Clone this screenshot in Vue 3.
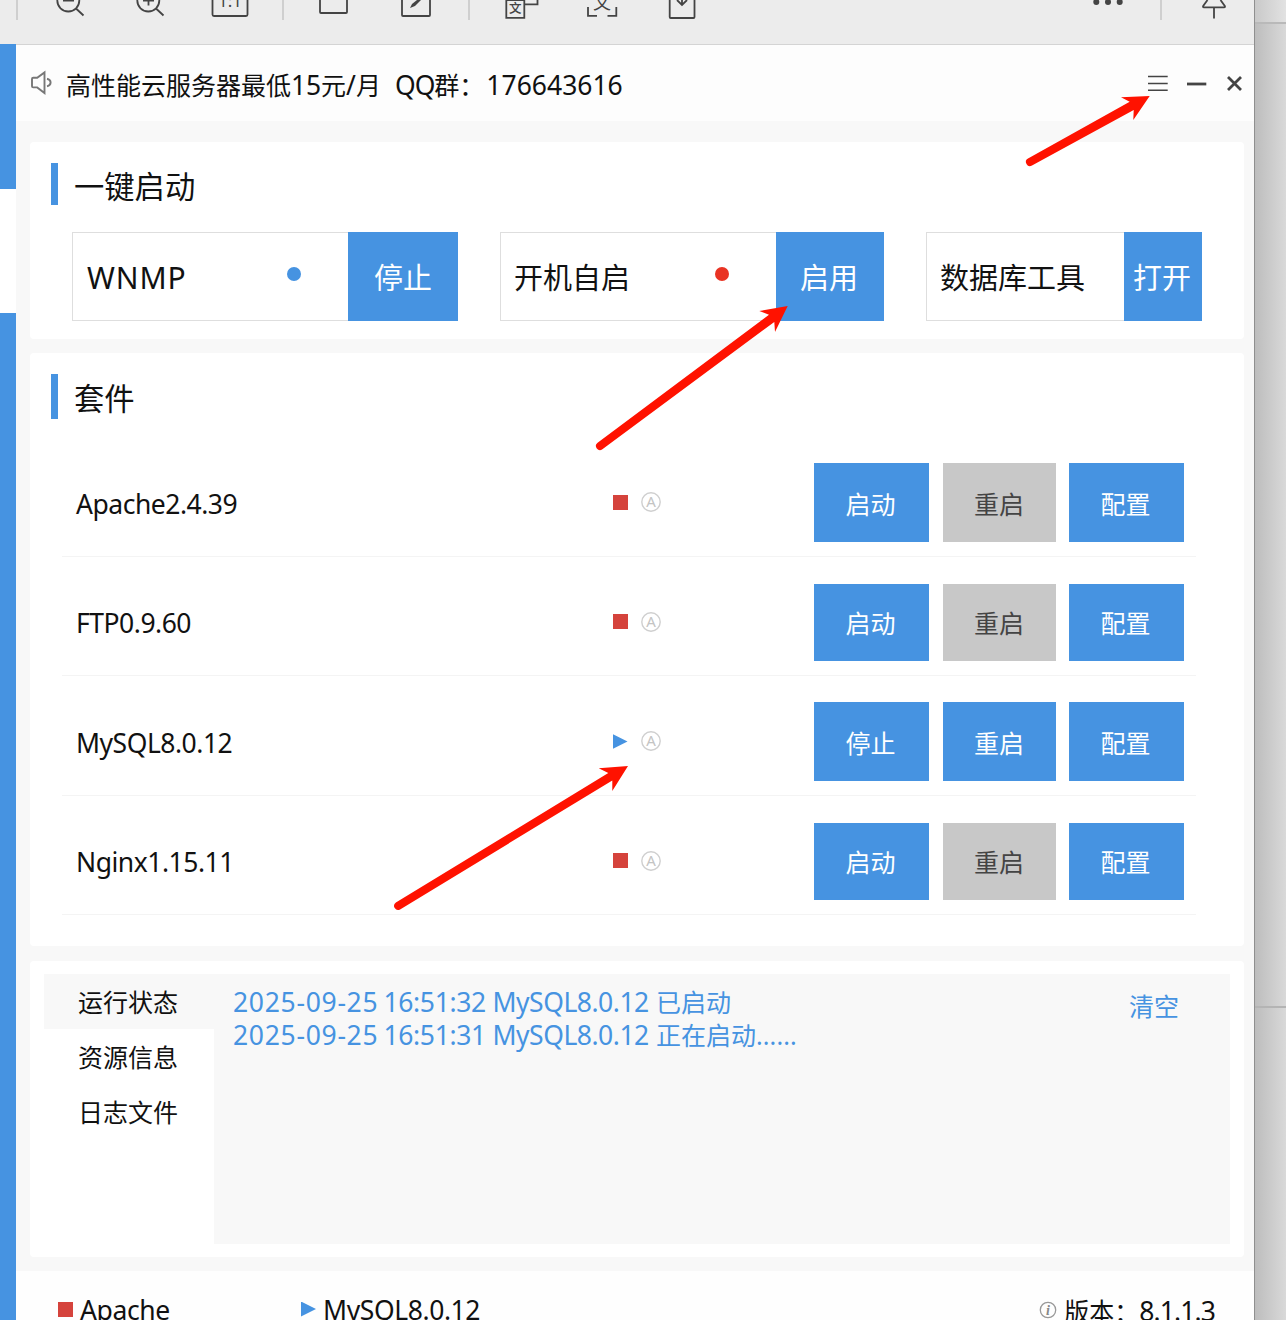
<script setup>
import { ref } from "vue";

const launchers = ref([
	{ name: "WNMP", latin: true, dot: "blue", action: "停止", size: "first" },
	{ name: "开机自启", dot: "red", action: "启用", size: "second" },
	{ name: "数据库工具", dot: null, action: "打开", size: "third" },
]);

const services = ref([
	{ name: "Apache2.4.39", running: false },
	{ name: "FTP0.9.60", running: false },
	{ name: "MySQL8.0.12", running: true },
	{ name: "Nginx1.15.11", running: false },
]);

const tabs = ["运行状态", "资源信息", "日志文件"];
const activeTab = ref(0);

const logs = ref([
	{ date: "2025-09-25", time: "16:51:32", name: "MySQL8.0.12", text: "已启动", tail: "" },
	{ date: "2025-09-25", time: "16:51:31", name: "MySQL8.0.12", text: "正在启动", tail: "......" },
]);

function toggle(service) {
	service.running = !service.running;
}

function clearLogs() {
	logs.value = [];
}
</script>

<template>
	<div class="desktop">
		<div class="window">
			<div class="toolbar">
				<svg width="40" height="24" viewBox="0 0 40 24">
					<path class="divider" d="M17 0V20" />
				</svg>
				<svg width="70" height="24" viewBox="40 0 70 24">
					<circle cx="68.3" cy="0.5" r="11" />
					<path d="M63 0.5H74M76 8.5L83.5 15.5" />
				</svg>
				<svg width="80" height="24" viewBox="110 0 80 24">
					<circle cx="148.3" cy="0.5" r="11" />
					<path d="M143 0.5H154M148.5 0V5.5M156 8.5L163.5 15.5" />
				</svg>
				<svg width="75" height="24" viewBox="190 0 75 24">
					<path d="M212.5 0V14.5Q212.5 16 214 16H246Q247.5 16 247.5 14.5V0" />
					<text x="230" y="7" font-size="17" text-anchor="middle" textLength="24">1:1</text>
				</svg>
				<svg width="35" height="24" viewBox="265 0 35 24">
					<path class="divider" d="M283 0V20" />
				</svg>
				<svg width="80" height="24" viewBox="300 0 80 24">
					<path d="M320 0V12Q320 13 321 13H346Q347 13 347 12V0" />
				</svg>
				<svg width="70" height="24" viewBox="380 0 70 24">
					<path d="M402 0V15Q402 16 403 16H429Q430 16 430 15V0" />
					<path class="filled" d="M417 0L412 4L410 8L415 6L421 0Z" />
				</svg>
				<svg width="38" height="24" viewBox="450 0 38 24">
					<path class="divider" d="M469 0V20" />
				</svg>
				<svg width="82" height="24" viewBox="488 0 82 24">
					<path d="M506.3 0V17.8H524.3V0M506 0.2H524M525 4.3H537.5V0" />
					<text x="515.2" y="13.4" font-size="12.5" font-weight="500" text-anchor="middle">文</text>
				</svg>
				<svg width="80" height="24" viewBox="570 0 80 24">
					<path d="M588 7V15.8H597M607.5 15.8H616.3V7" />
					<text x="602" y="8.5" font-size="18" text-anchor="middle">文</text>
				</svg>
				<svg width="430" height="24" viewBox="650 0 430 24">
					<path d="M669.7 0V17Q669.7 18 670.7 18H693.5Q694.5 18 694.5 17V0M682 0V5M677 0L682 5L687 0" />
				</svg>
				<svg width="60" height="24" viewBox="1080 0 60 24">
					<circle class="filled" cx="1096.3" cy="2" r="3" />
					<circle class="filled" cx="1108" cy="2" r="3" />
					<circle class="filled" cx="1119.7" cy="2" r="3" />
				</svg>
				<svg width="40" height="24" viewBox="1140 0 40 24">
					<path class="divider" d="M1161 0V20" />
				</svg>
				<svg width="74" height="24" viewBox="1180 0 74 24">
					<path d="M1207.5 0L1203.2 6Q1202.6 7.3 1204 7.3H1224Q1225.4 7.3 1224.8 6L1220.5 0M1214 7.5V18.5" />
				</svg>
			</div>

			<div class="main">
				<div class="sidebar">
					<div class="sidebar-active"></div>
				</div>

				<div class="panel">
					<div class="titlebar">
						<svg class="speaker" width="22" height="26" viewBox="30 70 22 26">
							<path d="M32 79Q32 77.8 33.2 77.8H37.2L44.5 72.4V93L37.2 87.4H33.2Q32 87.4 32 86.2Z" />
							<path d="M47 78.7Q50.6 79.5 50.6 82.5T47 86.4" />
						</svg>
						<div class="notice">
							高性能云服务器最低<span class="latin">15</span>元<span class="latin slash">/</span>月<span class="latin qq">QQ</span>群：<span class="latin group">176643616</span>
						</div>
						<svg class="controls" width="98" height="20" viewBox="1147 74 98 20">
							<path d="M1148 76.5H1167.7M1148 83.5H1167.7M1148 90.3H1167.7" stroke-width="1.4" />
							<path d="M1187 84H1206.3" stroke-width="2.8" />
							<path d="M1228 77L1241 90M1241 77L1228 90" stroke-width="2.8" />
						</svg>
					</div>

					<div class="content">
						<section class="card launch-card">
							<h2>一键启动</h2>
							<div class="launchers">
								<div v-for="item in launchers" :key="item.name" class="launcher" :class="item.size">
									<div class="launcher-box">
										<span class="launcher-name" :class="{ wide: item.latin }">{{ item.name }}</span>
										<span v-if="item.dot" class="dot" :class="item.dot"></span>
									</div>
									<button type="button">{{ item.action }}</button>
								</div>
							</div>
						</section>

						<section class="card suite-card">
							<h2>套件</h2>
							<div class="services">
								<div v-for="service in services" :key="service.name" class="service">
									<span class="service-name latin">{{ service.name }}</span>
									<span :class="service.running ? 'play' : 'stop'"></span>
									<svg class="auto" width="20" height="20" viewBox="0 0 20 20">
										<circle cx="10" cy="10" r="9.2" />
										<text x="10" y="15.3" text-anchor="middle">A</text>
									</svg>
									<div class="actions">
										<button type="button" @click="toggle(service)">
											{{ service.running ? "停止" : "启动" }}
										</button>
										<button class="middle" type="button" :disabled="!service.running">重启</button>
										<button type="button">配置</button>
									</div>
								</div>
							</div>
						</section>

						<section class="card status-card">
							<div class="tabs">
								<div
									v-for="(tab, index) in tabs"
									:key="tab"
									class="tab"
									:class="{ active: index === activeTab }"
									@click="activeTab = index"
								>
									{{ tab }}
								</div>
							</div>
							<div class="log">
								<div class="log-lines">
									<div v-for="log in logs" :key="log.time" class="log-line">
										<span class="log-date">{{ log.date }}</span>
										<span class="log-time">{{ log.time }}</span>
										<span class="latin log-name">{{ log.name }}</span>
										<span>{{ log.text }}<span class="log-tail">{{ log.tail }}</span></span>
									</div>
								</div>
								<div class="clear" @click="clearLogs">清空</div>
							</div>
						</section>
					</div>

					<div class="footer">
						<span class="stop"></span>
						<span class="footer-name first-name">Apache</span>
						<span class="play"></span>
						<span class="footer-name">MySQL8.0.12</span>
						<div class="version">
							<svg width="18" height="18" viewBox="0 0 18 18">
								<circle cx="9" cy="9" r="7.7" />
								<text x="9" y="13.6" text-anchor="middle">i</text>
							</svg>
							<span>版本：<span class="latin">8.1.1.3</span></span>
						</div>
					</div>
				</div>
			</div>
		</div>

		<div class="backdrop">
			<div class="backdrop-top"></div>
			<div class="backdrop-middle"></div>
		</div>

		<svg class="arrows" width="1286" height="1320" viewBox="0 0 1286 1320">
			<path d="M1028 158.5L1129.7 101.7L1121 97.3L1149.7 96L1133.3 120L1133.7 110L1032 165.5A4 4 0 0 1 1028 158.5Z" />
			<path d="M597.6 442.8L769 314.7L759.3 311L787.7 306L775 332L774.3 322L602.4 449.2A4 4 0 0 1 597.6 442.8Z" />
			<path d="M395.9 902.6L608.3 773L598.7 768.3L628 766L612.3 791L612.3 780.5L400.1 909.4A4 4 0 0 1 395.9 902.6Z" />
		</svg>
	</div>
</template>

<style>
body {
	margin: 0;
	overflow: hidden;
}
</style>

<style scoped>
.desktop {
	position: relative;
	display: flex;
	width: 1286px;
	height: 1320px;
	overflow: hidden;
	background: #c8c8c8;
	color: #111;
	font-family: "Noto Sans", "Noto Sans CJK SC", sans-serif;
	font-size: 25px;
}

.window {
	display: flex;
	flex-direction: column;
	width: 1254px;
	height: 1320px;
}

.toolbar {
	display: flex;
	flex: none;
	box-sizing: border-box;
	height: 45px;
	background: #ececec;
	border-bottom: 1px solid #d4d4d4;
}

.toolbar svg {
	flex: none;
	fill: none;
	stroke: #444;
	stroke-width: 1.8;
}

.toolbar .divider {
	stroke: #cfcfcf;
	stroke-width: 2;
}

.toolbar .filled,
.toolbar text {
	fill: #444;
	stroke: none;
}

.main {
	display: flex;
	flex: 1;
	min-height: 0;
}

.sidebar {
	width: 16px;
	margin-top: -1px;
	padding-top: 145px;
	background: #4693e1;
}

.sidebar-active {
	height: 124px;
	background: #fff;
}

.panel {
	display: flex;
	flex-direction: column;
	width: 1238px;
	background: #f8f8f8;
}

.titlebar {
	display: flex;
	flex: none;
	align-items: center;
	box-sizing: border-box;
	height: 76px;
	padding: 2px 9px 0 14px;
	background: #fdfdfd;
}

.speaker {
	margin-bottom: 2px;
	fill: none;
	stroke: #777;
	stroke-width: 1.9;
}

.notice {
	margin-left: 14px;
	height: 36px;
	line-height: 38px;
	white-space: nowrap;
}

.latin {
	font-size: 26.5px;
	letter-spacing: -0.48px;
}

.notice .latin {
	letter-spacing: -0.15px;
}

.notice .slash {
	letter-spacing: 0;
}

.notice .qq {
	margin-left: 14px;
	letter-spacing: -1px;
}

.notice .group {
	margin-left: 2px;
	letter-spacing: 0;
}

.controls {
	margin-left: auto;
	margin-bottom: 1px;
	fill: none;
	stroke: #444;
}

.content {
	flex: none;
	padding: 21px 10px 0 14px;
}

.card {
	box-sizing: border-box;
	background: #fff;
	border-radius: 4px;
}

h2 {
	margin: 0;
	padding-left: 16px;
	border-left: 7px solid #4693e1;
	font-size: 30.3px;
	font-weight: 400;
}

button {
	padding: 0;
	border: none;
	background: #4693e1;
	color: #fff;
	font: inherit;
	cursor: pointer;
}

.launch-card {
	height: 197px;
	padding: 21px 0 0 21px;
}

.launch-card h2 {
	height: 42px;
	line-height: 47px;
}

.launchers {
	display: flex;
	gap: 42px;
	margin: 27px 0 0 21px;
}

.launcher {
	display: flex;
	height: 89px;
	font-size: 29px;
	line-height: 92px;
}

.launcher.first {
	width: 386px;
}

.launcher.second {
	width: 384px;
}

.launcher.third {
	width: 276px;
}

.launcher-box {
	display: flex;
	flex: 1;
	box-sizing: border-box;
	padding: 0 47px 0 13px;
	border: 1px solid #dedede;
	border-right: none;
}

.launcher.third .launcher-box {
	padding-right: 0;
}

.launcher-name {
	margin-top: -1px;
	white-space: nowrap;
}

.launcher-name.wide {
	margin-left: 1px;
	font-size: 30px;
	letter-spacing: 0.9px;
}

.launcher button {
	width: 110px;
	padding-bottom: 1px;
}

.launcher.second button {
	width: 108px;
	padding-right: 2px;
}

.launcher.third button {
	width: 78px;
	padding-right: 2px;
}

.dot {
	width: 14px;
	height: 14px;
	margin: 34px 0 0 auto;
	border-radius: 50%;
}

.dot.blue {
	background: #4693e1;
}

.dot.red {
	background: #e93323;
}

.suite-card {
	height: 593px;
	margin-top: 14px;
	padding: 21px 48px 0 21px;
}

.suite-card h2 {
	height: 45px;
	line-height: 50px;
}

.services {
	margin: 18px 0 0 11px;
}

.service {
	display: flex;
	align-items: flex-start;
	box-sizing: border-box;
	height: 119px;
	padding: 27px 12px 0 14px;
	border-bottom: 1px solid #f4f4f4;
}

.service:nth-child(odd) {
	height: 120px;
}

.service-name {
	width: 536.5px;
	height: 77px;
	line-height: 79px;
}

.service:nth-child(odd) .service-name {
	line-height: 81px;
}

.stop {
	width: 15px;
	height: 15px;
	background: #d5433c;
}

.play {
	width: 15px;
	height: 15px;
	background: #4693e1;
	clip-path: polygon(0 0, 100% 50%, 0 100%);
}

.service .stop,
.service .play {
	margin-top: 31px;
}

.service:nth-child(even) .stop,
.service:nth-child(even) .play {
	margin-top: 30px;
}

.auto {
	margin: 28px 0 0 13.5px;
	fill: none;
	stroke: #cfcfcf;
	stroke-width: 1.4;
}

.auto text {
	fill: #c4c4c4;
	stroke: none;
	font-size: 15px;
}

.actions {
	display: flex;
	gap: 13.5px;
	margin-left: auto;
}

.actions button {
	box-sizing: border-box;
	width: 115px;
	height: 77px;
	padding: 0 2px 1px 0;
}

.service:nth-child(odd) .actions button {
	height: 79px;
	margin-top: -1px;
	padding: 1px 2px 0 0;
}

.actions .middle,
.service:nth-child(odd) .actions .middle {
	width: 113px;
	padding-right: 0;
}

.actions button:disabled {
	background: #c8c8c8;
	color: #444;
}

.status-card {
	display: flex;
	height: 296px;
	margin-top: 15px;
	padding: 13px 14px 13px 14px;
}

.tabs {
	width: 170px;
}

.tab {
	box-sizing: border-box;
	height: 55px;
	padding-left: 34px;
	line-height: 57px;
	cursor: pointer;
}

.tab.active {
	background: #f8f8f8;
}

.log {
	display: flex;
	flex: 1;
	justify-content: space-between;
	padding: 12px 51px 0 19px;
	background: #f8f8f8;
	color: #4693e1;
}

.log-line {
	display: flex;
	height: 33px;
	line-height: 33px;
	white-space: nowrap;
}

.log-date,
.log-time {
	font-size: 26.5px;
}

.log-date {
	width: 150.5px;
	letter-spacing: 0.7px;
}

.log-time {
	width: 109px;
	letter-spacing: -0.35px;
}

.log-name {
	width: 163.5px;
}

.log-tail {
	letter-spacing: 0.1px;
}

.clear {
	height: 40px;
	line-height: 40px;
	cursor: pointer;
}

.footer {
	display: flex;
	flex: none;
	align-items: center;
	height: 78px;
	margin-top: 14px;
	padding: 0 39px 0 42px;
	background: #fefefe;
}

.footer .stop,
.footer .play {
	margin-bottom: 2px;
}

.footer-name {
	margin-left: 7px;
	font-size: 26.5px;
	letter-spacing: -0.4px;
}

.first-name {
	width: 221px;
}

.version {
	display: flex;
	align-items: center;
	gap: 7px;
	margin-left: auto;
}

.version .latin {
	letter-spacing: -0.9px;
}

.version svg {
	fill: none;
	stroke: #999;
	stroke-width: 1.3;
}

.version text {
	fill: #888;
	stroke: none;
	font-family: "Liberation Serif", serif;
	font-size: 14px;
	font-style: italic;
	font-weight: 700;
}

.backdrop {
	flex: 1;
	box-sizing: border-box;
	border-left: 1px solid #8f8f8f;
	background: linear-gradient(to right, #bdbdbd, #d9d9d9);
}

.backdrop-top {
	height: 22px;
	border-bottom: 2px solid #b9b9b9;
	background: linear-gradient(to right, #c9c9c9, #e2e2e2);
}

.backdrop-middle {
	height: 982px;
	border-bottom: 2px solid #b4b4b4;
}

.arrows {
	position: absolute;
	top: 0;
	left: 0;
	fill: #ff1200;
	pointer-events: none;
}
</style>
